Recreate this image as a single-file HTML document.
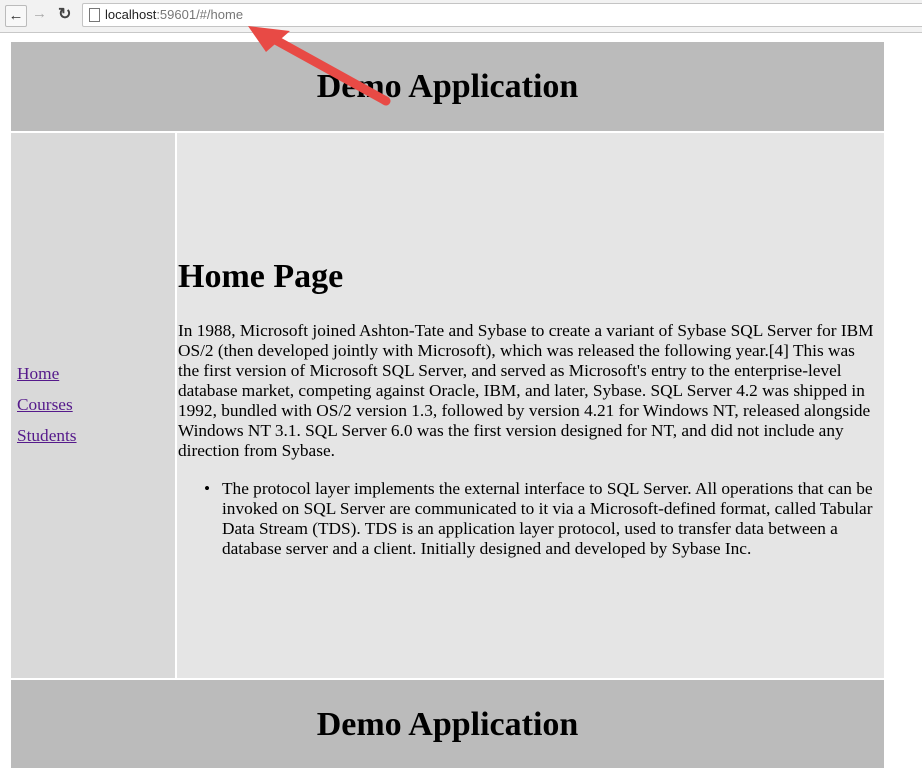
<!DOCTYPE html>
<html><head><meta charset="utf-8"><style>
body{margin:0;width:922px;height:768px;overflow:hidden;background:#fff;position:relative;font-family:"Liberation Serif","Times New Roman",serif;color:#000}
.a{position:absolute;white-space:nowrap}
.bar{position:absolute;left:0;top:0;width:922px;height:32px;background:#f2f2f2;border-bottom:1px solid #c8c8c8}
.url{position:absolute;left:82px;top:3px;width:840px;height:22px;background:#fff;border:1px solid #c4c4c4;border-radius:2px;font-family:"Liberation Sans",sans-serif;font-size:13px;line-height:22px}
.hdr{position:absolute;left:11px;width:873px;background:#bbbbbb;text-align:center;font-weight:bold;font-size:34px}
.t{font-size:17.3px;line-height:20px}
a{color:#551a8b}
</style></head><body>
<div class="bar">
 <div class="a" style="left:5px;top:5px;width:20px;height:20px;border:1px solid #bbb;border-radius:2px;background:#f8f8f8;font:bold 15px 'Liberation Sans';text-align:center;line-height:19px;color:#333">&#8592;</div>
 <div class="a" style="left:32px;top:5px;font:bold 15px 'Liberation Sans';color:#aaa">&#8594;</div>
 <div class="a" style="left:58px;top:4px;font:bold 16px 'Liberation Sans';color:#444">&#8635;</div>
 <div class="url"><span style="position:absolute;left:6px;top:4px;width:9px;height:12px;border:1px solid #777"></span><span style="position:absolute;left:22px;color:#222">localhost<span style="color:#777">:59601/#/home</span></span></div>
</div>
<div class="hdr" style="top:42px;height:89px;line-height:90px">Demo Application</div>
<div class="a" style="left:11px;top:133px;width:164px;height:545px;background:#d9d9d9"></div>
<div class="a" style="left:177px;top:133px;width:707px;height:545px;background:#e5e5e5"></div>
<div class="hdr" style="top:680px;height:88px;line-height:90px">Demo Application</div>
<div class="a t" style="left:17px;top:364px"><a href="#">Home</a></div>
<div class="a t" style="left:17px;top:395px"><a href="#">Courses</a></div>
<div class="a t" style="left:17px;top:426px"><a href="#">Students</a></div>
<div class="a" style="left:178px;top:258px;font-size:34px;font-weight:bold">Home Page</div>
<div class="a t" style="left:178px;top:321px">In 1988, Microsoft joined Ashton-Tate and Sybase to create a variant of Sybase SQL Server for IBM<br>OS/2 (then developed jointly with Microsoft), which was released the following year.[4] This was<br>the first version of Microsoft SQL Server, and served as Microsoft's entry to the enterprise-level<br>database market, competing against Oracle, IBM, and later, Sybase. SQL Server 4.2 was shipped in<br>1992, bundled with OS/2 version 1.3, followed by version 4.21 for Windows NT, released alongside<br>Windows NT 3.1. SQL Server 6.0 was the first version designed for NT, and did not include any<br>direction from Sybase.</div>
<div class="a t" style="left:204px;top:479px">&#8226;</div>
<div class="a t" style="left:222px;top:479px">The protocol layer implements the external interface to SQL Server. All operations that can be<br>invoked on SQL Server are communicated to it via a Microsoft-defined format, called Tabular<br>Data Stream (TDS). TDS is an application layer protocol, used to transfer data between a<br>database server and a client. Initially designed and developed by Sybase Inc.</div>
<svg class="a" style="left:0;top:0" width="922" height="768"><line x1="386" y1="101" x2="272" y2="38" stroke="#e84a45" stroke-width="9" stroke-linecap="round"/><polygon points="248,26 290,31 266,52" fill="#e84a45"/></svg>
</body></html>
